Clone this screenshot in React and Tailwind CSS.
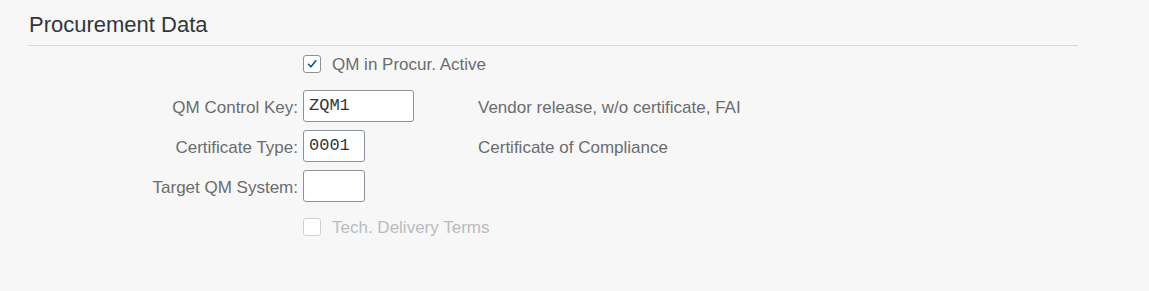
import React from 'react';

const font = { fontFamily: '"Liberation Sans", Arial, sans-serif' };

const CheckBox = ({ checked, disabled, label }) => (
  <div className="flex items-center h-[18px]">
    <span
      className={`w-[18px] h-[18px] rounded-[3px] border bg-white flex items-center justify-center ${
        disabled ? 'border-[#cfd2d4] bg-[#f9f9f9]' : 'border-[#89919a]'
      }`}
    >
      {checked && (
        <svg width="12" height="12" viewBox="0 0 12 12" fill="none">
          <path d="M2.5 6.3 L5 8.8 L9.8 2.8" stroke="#0854a0" strokeWidth="1.6" strokeLinecap="round" strokeLinejoin="round" />
        </svg>
      )}
    </span>
    <span className={`ml-[11px] pt-[2px] text-[17px] ${disabled ? 'text-[#b9bcbf]' : 'text-[#6a6d70]'}`}>{label}</span>
  </div>
);

const FieldRow = ({ label, value, width, desc, className = '' }) => (
  <div className={`flex items-center h-[32px] ${className}`}>
    <div className="w-[270px] pt-[3px] text-right text-[17px] text-[#6a6d70]">{label}</div>
    <div className="ml-[5px] w-[175px] shrink-0">
      <div
        className={`${width} h-[32px] bg-white border border-[#89919a] rounded-[3px] px-[5px] flex items-center text-[17px] text-[#32363a]`}
        style={{ fontFamily: '"Liberation Mono", "Courier New", monospace' }}
      >
        {value}
      </div>
    </div>
    {desc && <div className="pt-[3px] text-[17px] text-[#6a6d70]">{desc}</div>}
  </div>
);

export default function App() {
  return (
    <div className="w-[1149px] h-[291px] bg-[#f7f7f7] overflow-hidden" style={font}>
      <div className="ml-[28px] w-[1050px]">
        <div className="pt-[12px] pb-[7px] border-b border-[#d9d9d9]">
          <h2 className="pl-[1px] text-[22px] leading-[26px] text-[#32363a]">Procurement Data</h2>
        </div>

        <div className="flex flex-col pt-[9px]">
          <div className="pl-[275px]">
            <CheckBox checked label="QM in Procur. Active" />
          </div>
          <FieldRow className="mt-[17px]" label="QM Control Key:" value="ZQM1" width="w-[111px]" desc="Vendor release, w/o certificate, FAI" />
          <FieldRow className="mt-[8px]" label="Certificate Type:" value="0001" width="w-[62px]" desc="Certificate of Compliance" />
          <FieldRow className="mt-[8px]" label="Target QM System:" value="" width="w-[62px]" />
          <div className="pl-[275px] mt-[16px]">
            <CheckBox disabled label="Tech. Delivery Terms" />
          </div>
        </div>
      </div>
    </div>
  );
}
